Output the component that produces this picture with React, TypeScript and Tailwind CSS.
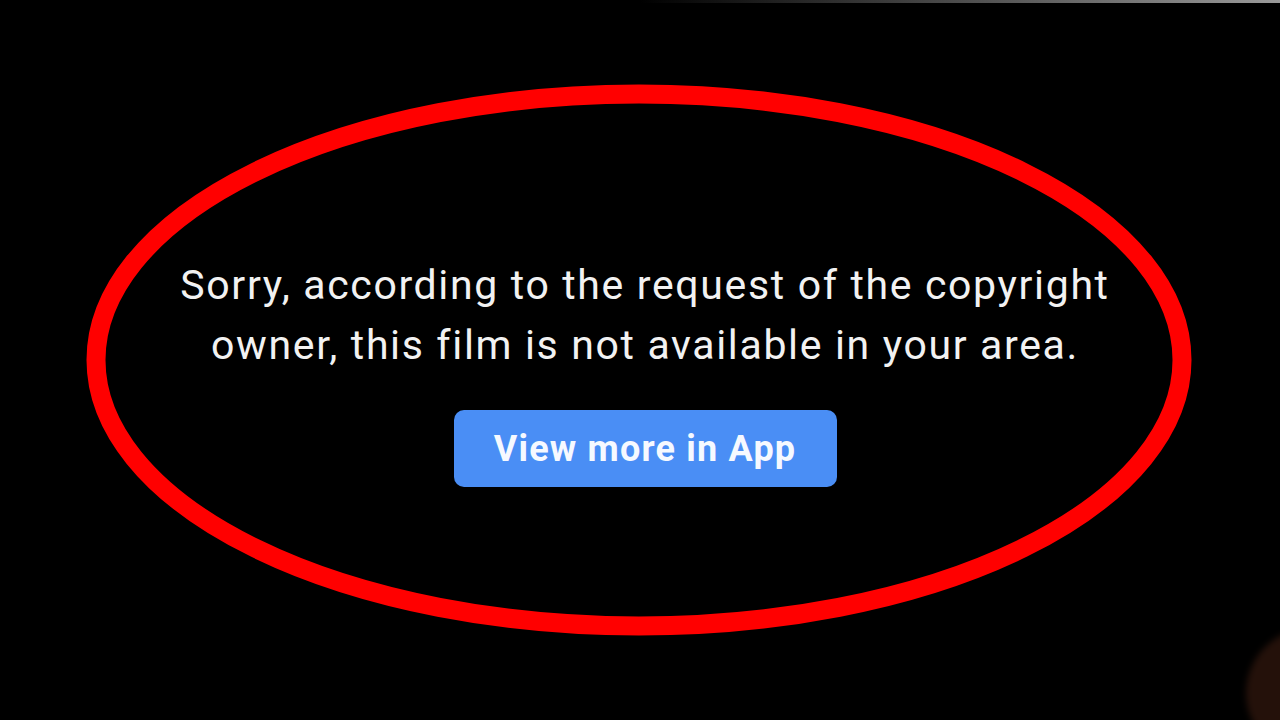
export default function App() {
  return (
    <div className="relative flex h-[720px] w-[1280px] flex-col items-center overflow-hidden bg-black pl-[10px] font-['Roboto',_'Liberation_Sans',_sans-serif]">
      {/* faint top edge */}
      <div className="absolute left-0 top-0 h-[3px] w-full bg-gradient-to-r from-transparent via-transparent to-[#9a9a9a]" />

      {/* red annotation ellipse */}
      <svg className="pointer-events-none absolute inset-0" width="1280" height="720" viewBox="0 0 1280 720">
        <ellipse cx="639" cy="360" rx="543" ry="266" fill="none" stroke="#ff0000" strokeWidth="19" />
      </svg>

      {/* blurry orange blob, bottom right */}
      <div className="absolute left-[1246px] top-[628px] h-[130px] w-[130px] rounded-full bg-[#24110a] blur-[3px]" />

      <div className="mt-[255px] flex flex-col items-center">
        <p className="text-center text-[41px] leading-[60px] tracking-[1.65px] text-[#f2f2f2]">
          Sorry, according to the request of the copyright
          <br />
          owner, this film is not available in your area.
        </p>
        <button className="mt-[35px] flex h-[77px] w-[383px] items-center justify-center rounded-[10px] bg-[#4a8ef5] text-[36px] font-bold tracking-[1.2px] text-[#f6f9ff]">
          View more in App
        </button>
      </div>
    </div>
  );
}
